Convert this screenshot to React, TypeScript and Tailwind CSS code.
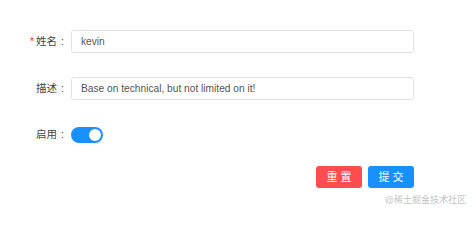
import { useState } from "react"

function Label({ text, required }: { text: string; required?: boolean }) {
  return (
    <div className="flex w-[71px] shrink-0 items-center justify-end pr-[4px] text-[10.5px] text-[#444]">
      {required && <span className="mr-[2px] text-[10px] text-[#f5222d]">*</span>}
      <span>{text}</span>
      <span className="ml-[4px] w-[6px]">:</span>
    </div>
  )
}

export default function App() {
  const [name, setName] = useState("kevin")
  const [desc, setDesc] = useState("Base on technical, but not limited on it!")
  const [enabled, setEnabled] = useState(true)

  return (
    <div
      className="relative h-[211px] w-[474px] bg-white"
      style={{ fontFamily: '"Liberation Sans", "Noto Sans CJK SC", sans-serif' }}
    >
      <div className="flex flex-col pt-[30px]">
        {/* name */}
        <div className="flex items-center">
          <Label text="姓名" required />
          <input
            value={name}
            onChange={(e) => setName(e.target.value)}
            className="h-[23px] w-[343px] rounded-[3px] border border-[#e2e2e2] px-[9px] text-[10.2px] text-[#555] outline-none"
          />
        </div>

        {/* description */}
        <div className="mt-[24px] flex items-center">
          <Label text="描述" />
          <input
            value={desc}
            onChange={(e) => setDesc(e.target.value)}
            className="h-[23px] w-[343px] rounded-[3px] border border-[#e2e2e2] px-[9px] text-[10.2px] text-[#555] outline-none"
          />
        </div>

        {/* switch */}
        <div className="mt-[27px] flex items-center">
          <Label text="启用" />
          <button
            onClick={() => setEnabled(!enabled)}
            className={`flex h-[16px] w-[32px] items-center rounded-full px-[2px] ${
              enabled ? "justify-end bg-[#1890ff]" : "justify-start bg-[#bfbfbf]"
            }`}
          >
            <span className="h-[12px] w-[12px] rounded-full bg-white" />
          </button>
        </div>

        {/* actions */}
        <div className="mt-[23px] flex justify-end gap-[6px] pr-[60px]">
          <button className="h-[22px] w-[46px] rounded-[3px] bg-[#ff4d4f] pl-[3px] text-[11px] tracking-[3px] text-white">
            重置
          </button>
          <button className="h-[22px] w-[46px] rounded-[3px] bg-[#1890ff] pl-[3px] text-[11px] tracking-[3px] text-white">
            提交
          </button>
        </div>
      </div>

      <div className="absolute bottom-[4px] right-[8px] text-[9px] text-[#c4c4c4]">@稀土掘金技术社区</div>
    </div>
  )
}
